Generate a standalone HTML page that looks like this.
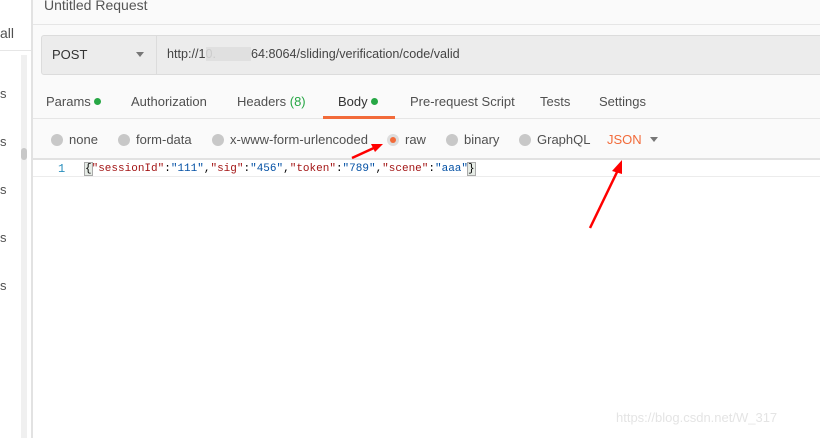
<!DOCTYPE html>
<html><head><style>
body{margin:0;width:820px;height:438px;overflow:hidden;background:#fff;font-family:"Liberation Sans",sans-serif;position:relative}
.a{position:absolute;white-space:nowrap}
.t{font-size:13px;color:#505050}
.rd{position:absolute;width:12px;height:12px;border-radius:50%;background:#c8c8c8;top:134px}
.mono{font-family:"Liberation Mono",monospace;font-size:11px}
</style></head><body>
<div class="a" style="left:0;top:0;width:31px;height:438px;background:#fff"></div>
<div class="a" style="left:0;top:50px;width:31px;height:1px;background:#e6e6e6"></div>
<div class="a" style="left:21px;top:55px;width:6px;height:383px;background:#f0f0f0"></div>
<div class="a" style="left:21px;top:148px;width:6px;height:12px;background:#c8c8c8;border-radius:3px"></div>
<div class="a" style="left:31px;top:0;width:2px;height:438px;background:#e2e2e2"></div>
<div class="a t" style="left:0;top:25px;font-size:14px">all</div>
<div class="a t" style="left:0;top:86px">s</div>
<div class="a t" style="left:0;top:134px">s</div>
<div class="a t" style="left:0;top:182px">s</div>
<div class="a t" style="left:0;top:230px">s</div>
<div class="a t" style="left:0;top:278px">s</div>
<div class="a" style="left:33px;top:0;width:787px;height:158px;background:#fafafa"></div>
<div class="a" style="left:44px;top:-3px;font-size:14px;color:#555">Untitled Request</div>
<div class="a" style="left:33px;top:24px;width:787px;height:1px;background:#e6e6e6"></div>
<div class="a" style="left:41px;top:35px;width:785px;height:38px;background:#ececec;border:1px solid #dcdcdc;border-radius:3px"></div>
<div class="a" style="left:156px;top:36px;width:1px;height:38px;background:#dcdcdc"></div>
<div class="a" style="left:52px;top:47px;font-size:13px;color:#333">POST</div>
<div class="a" style="left:136px;top:52px;width:0;height:0;border-left:4px solid transparent;border-right:4px solid transparent;border-top:5px solid #777"></div>
<div class="a" style="left:167px;top:47px;font-size:12.6px;color:#444">http://1<span style="color:#ccc;background:#e0e0e0">0.&nbsp;&nbsp;&nbsp;&nbsp;&nbsp;&nbsp;&nbsp;&nbsp;&nbsp;&nbsp;</span>64:8064/sliding/verification/code/valid</div>
<div class="a t" style="left:46px;top:94px">Params <span style="display:inline-block;width:7px;height:7px;border-radius:50%;background:#27a745;vertical-align:1px"></span></div>
<div class="a t" style="left:131px;top:94px">Authorization</div>
<div class="a t" style="left:237px;top:94px">Headers <span style="color:#27a745">(8)</span></div>
<div class="a t" style="left:338px;top:94px;color:#333">Body <span style="display:inline-block;width:7px;height:7px;border-radius:50%;background:#27a745;vertical-align:1px"></span></div>
<div class="a t" style="left:410px;top:94px">Pre-request Script</div>
<div class="a t" style="left:540px;top:94px">Tests</div>
<div class="a t" style="left:599px;top:94px">Settings</div>
<div class="a" style="left:33px;top:118px;width:787px;height:1px;background:#e6e6e6"></div>
<div class="a" style="left:323px;top:116px;width:72px;height:3px;background:#f26b3a"></div>
<div class="rd" style="left:51px"></div><div class="a t" style="left:69px;top:132px">none</div>
<div class="rd" style="left:118px"></div><div class="a t" style="left:136px;top:132px">form-data</div>
<div class="rd" style="left:212px"></div><div class="a t" style="left:230px;top:132px">x-www-form-urlencoded</div>
<div class="rd" style="left:387px;background:#ddd"><div style="margin:3px;width:6px;height:6px;border-radius:50%;background:#f26b3a"></div></div><div class="a t" style="left:405px;top:132px">raw</div>
<div class="rd" style="left:446px"></div><div class="a t" style="left:464px;top:132px">binary</div>
<div class="rd" style="left:519px"></div><div class="a t" style="left:537px;top:132px">GraphQL</div>
<div class="a t" style="left:607px;top:132px;color:#f26b3a">JSON</div>
<div class="a" style="left:650px;top:137px;width:0;height:0;border-left:4px solid transparent;border-right:4px solid transparent;border-top:5px solid #777"></div>
<div class="a" style="left:33px;top:158px;width:787px;height:2px;background:#e2e2e2"></div>
<div class="a" style="left:33px;top:176px;width:787px;height:1px;background:#ececec"></div>
<div class="a mono" style="left:58px;top:162px;color:#2a8fbd;font-size:12px">1</div>
<div class="a mono" style="left:85px;top:163px;color:#a31515"><span style="color:#000;background:#e6ece6;outline:1px solid #aaa">{</span>"sessionId"<span style="color:#000">:</span><span style="color:#0451a5">"111"</span><span style="color:#000">,</span>"sig"<span style="color:#000">:</span><span style="color:#0451a5">"456"</span><span style="color:#000">,</span>"token"<span style="color:#000">:</span><span style="color:#0451a5">"789"</span><span style="color:#000">,</span>"scene"<span style="color:#000">:</span><span style="color:#0451a5">"aaa"</span><span style="color:#000;background:#e6ece6;outline:1px solid #aaa">}</span></div>
<svg class="a" style="left:0;top:0" width="820" height="438">
<line x1="352" y1="158" x2="376" y2="147" stroke="#f00" stroke-width="2.5"/>
<polygon points="383,144 371,144 375,152" fill="#f00"/>
<line x1="590" y1="228" x2="618" y2="170" stroke="#f00" stroke-width="2.5"/>
<polygon points="622,160 612,171 622,174" fill="#f00"/>
</svg>
<div class="a" style="left:616px;top:410px;font-size:13px;color:#e4e4e4">https://blog.csdn.net/W_317</div>
</body></html>
